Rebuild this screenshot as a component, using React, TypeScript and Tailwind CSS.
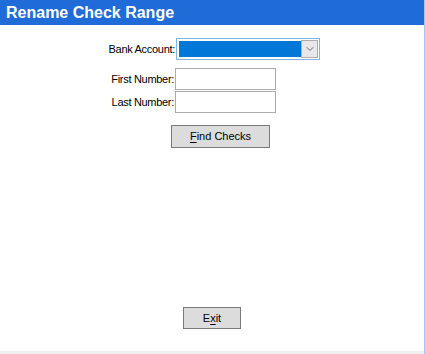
import { ChevronDown } from "lucide-react";

const font = { fontFamily: '"Liberation Sans", Arial, sans-serif' };

function Label({ children, className = "" }: { children: React.ReactNode; className?: string }) {
  return (
    <span className={`text-[11px] tracking-[-0.3px] text-black leading-none text-right ${className}`}>
      {children}
    </span>
  );
}

export default function App() {
  return (
    <div
      style={font}
      className="flex h-[354px] w-[425px] flex-col overflow-hidden bg-white border-r border-[#a9c6ee]"
    >
      <div className="flex h-[25px] shrink-0 items-center bg-[#1f6bd8] pl-[6px]">
        <h1 className="text-[16px] font-bold leading-none text-white">Rename Check Range</h1>
      </div>

      <div className="flex flex-1 flex-col">
        {/* bank account */}
        <div className="mt-[13px] flex h-[22px] items-center">
          <Label className="w-[176px] pr-px">Bank Account:</Label>
          <div className="flex h-[22px] w-[144px] items-stretch border border-[#7eb4ea] p-[2px] bg-white">
            <div className="flex-1 bg-[#0078d7]" />
            <div className="flex w-[17px] items-center justify-center border border-[#adadad] bg-[#e8e8e8] -my-[1px] -mr-[1px]">
              <ChevronDown className="h-3 w-3 text-[#404040]" strokeWidth={1.5} />
            </div>
          </div>
        </div>

        {/* number range */}
        <div className="mt-[8px] flex flex-col gap-px">
          <div className="flex h-[22px] items-center">
            <Label className="w-[175px] pr-px">First Number:</Label>
            <div className="h-[22px] w-[101px] border border-[#ababab] bg-white" />
          </div>
          <div className="flex h-[22px] items-center">
            <Label className="w-[175px] pr-px">Last Number:</Label>
            <div className="h-[22px] w-[101px] border border-[#ababab] bg-white" />
          </div>
        </div>

        <div className="mt-[10px] pl-[171px]">
          <button className="h-[23px] w-[99px] border border-[#7a7a7a] bg-[#dcdcdc] text-[11px] text-black">
            <span className="underline underline-offset-2">F</span>ind Checks
          </button>
        </div>

        <div className="flex-1" />

        <div className="mb-[22px] flex justify-center">
          <button className="h-[22px] w-[58px] border border-[#7a7a7a] bg-[#dcdcdc] text-[11px] text-black">
            E<span className="underline underline-offset-2">x</span>it
          </button>
        </div>
      </div>

      <div className="h-[3px] shrink-0 bg-[#f0f0f0]" />
    </div>
  );
}
